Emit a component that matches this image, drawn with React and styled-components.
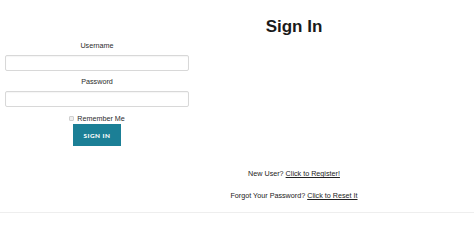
import styled, { createGlobalStyle } from "styled-components"

const Global = createGlobalStyle`
body{
    margin: 0;
    background: #fff;
    font-family: "Liberation Sans", Arial, sans-serif;
    color: #222;
}
`

const Pagina = styled.main`
width: 100%;
display: flex;
flex-direction: column;
`

const Titulo = styled.h1`
margin: 17px 0 4px;
padding-left: 114px;
font-size: 17px;
line-height: 20px;
font-weight: bold;
text-align: center;
color: #1a1a1a;
`

const Formulario = styled.form`
width: 184px;
margin-left: 5px;
display: flex;
flex-direction: column;
align-items: center;
`

const Rotulo = styled.label`
font-size: 7.2px;
line-height: 9px;
color: #2b2b2b;
margin-top: ${props => props.$topo}px;
margin-bottom: 5px;
`

const Entrada = styled.input`
box-sizing: border-box;
width: 100%;
height: 16px;
border: 1px solid #d8d8d8;
border-radius: 2px;
box-shadow: inset 0 1px 1px rgba(0,0,0,0.04);
background: #fff;
padding: 0 4px;
font-size: 7px;
margin: 0;
outline: none;
`

const Lembrar = styled.div`
margin-top: 7px;
display: flex;
align-items: center;
gap: 3px;
font-size: 7.2px;
line-height: 9px;
color: #2b2b2b;
`

const Caixa = styled.span`
display: block;
width: 5px;
height: 5px;
border: 1px solid #cfcfcf;
border-radius: 1px;
background: #efefef;
box-sizing: border-box;
`

const Botao = styled.button`
margin-top: 1px;
width: 48px;
height: 22px;
border: none;
background-color: #1b7f96;
color: #fff;
font-family: "Lato", "Open Sans", sans-serif;
font-weight: 900;
font-size: 6.4px;
letter-spacing: 0.5px;
padding: 0;
cursor: pointer;
`

const Ligacoes = styled.div`
margin-top: 23px;
padding-left: 114px;
display: flex;
flex-direction: column;
gap: 13px;
align-items: center;
`

const Linha = styled.p`
margin: 0;
font-size: 7.2px;
line-height: 9px;
color: #222;
a{
    color: #222;
    text-decoration: underline;
}
`

const Rodape = styled.footer`
margin-top: 12px;
border-top: 1px solid #eeeeee;
height: 10px;
background: #fff;
`

export default function App() {
    return (
        <>
            <Global />
            <Pagina>
                <Titulo>Sign In</Titulo>
                <Formulario onSubmit={e => e.preventDefault()}>
                    <Rotulo $topo={0}>Username</Rotulo>
                    <Entrada type="text" />
                    <Rotulo $topo={6}>Password</Rotulo>
                    <Entrada type="password" />
                    <Lembrar>
                        <Caixa />
                        Remember Me
                    </Lembrar>
                    <Botao type="submit">SIGN IN</Botao>
                </Formulario>
                <Ligacoes>
                    <Linha>New User? <a href="#">Click to Register!</a></Linha>
                    <Linha>Forgot Your Password? <a href="#">Click to Reset It</a></Linha>
                </Ligacoes>
                <Rodape />
            </Pagina>
        </>
    )
}
